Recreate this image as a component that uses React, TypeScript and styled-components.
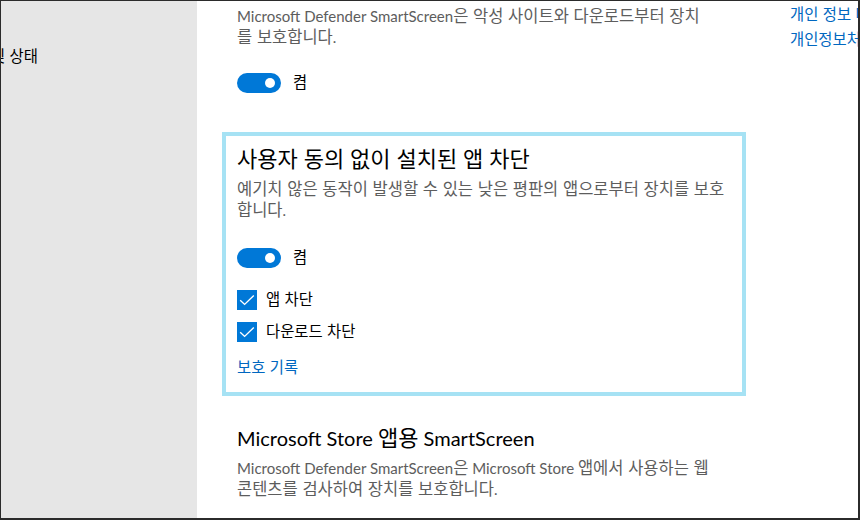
import React from "react";
import styled, { createGlobalStyle } from "styled-components";

const Global = createGlobalStyle`
  html, body { margin: 0; padding: 0; background: #ffffff; }
  body { font-family: "Lato", "Noto Sans CJK KR", sans-serif; }
  * { box-sizing: border-box; }
`;

const Frame = styled.div`
  width: 860px;
  height: 520px;
  display: flex;
  overflow: hidden;
  border-style: solid;
  border-color: #2b2b2b;
  border-width: 1px 2px 2px 1px;
  background: #ffffff;
`;

const Sidebar = styled.nav`
  width: 196px;
  flex: none;
  background: #e6e6e6;
  overflow: hidden;
  padding-top: 45px;
`;

const NavItem = styled.div`
  margin-left: -10px;
  font-size: 14px;
  line-height: 22px;
  color: #000000;
  white-space: nowrap;
`;

const Main = styled.main`
  flex: 1;
  display: flex;
  min-width: 0;
`;

const Column = styled.div`
  width: 565px;
  flex: none;
  padding-left: 25px;
`;

const Section = styled.section<{ $focused?: boolean; $top?: number; $bottom?: number }>`
  width: 524px;
  border: 4px solid ${(p) => (p.$focused ? "#a6e2f4" : "transparent")};
  padding: ${(p) => p.$top ?? 0}px 11px ${(p) => p.$bottom ?? 0}px;
`;

const Heading = styled.h2`
  margin: 0;
  font-weight: 400;
  font-size: 20px;
  line-height: 28px;
  color: #000000;
  white-space: nowrap;
`;

const Desc = styled.p<{ $gap?: number }>`
  margin: ${(p) => p.$gap ?? 0}px 0 0;
  font-size: 15px;
  line-height: 21px;
  color: #5d5d5d;
  white-space: nowrap;
`;

const Hangul = styled.span`
  display: inline-block;
  font-family: "Noto Sans CJK KR", sans-serif;
  font-size: 1.1em;
  line-height: 1.1;
  word-spacing: 1px;
  vertical-align: baseline;
`;

const ToggleRow = styled.div<{ $gap: number }>`
  display: flex;
  align-items: center;
  gap: 12px;
  margin-top: ${(p) => p.$gap}px;
  height: 20px;
`;

const Switch = styled.span`
  position: relative;
  width: 44px;
  height: 20px;
  border-radius: 10px;
  background: #0078d7;
  flex: none;
  &::after {
    content: "";
    position: absolute;
    top: 5px;
    right: 6px;
    width: 10px;
    height: 10px;
    border-radius: 50%;
    background: #ffffff;
  }
`;

const SmallLabel = styled.span`
  font-size: 14px;
  line-height: 20px;
  color: #000000;
`;

const CheckRow = styled.label<{ $gap: number }>`
  display: flex;
  align-items: center;
  gap: 9px;
  margin-top: ${(p) => p.$gap}px;
  height: 20px;
`;

const Box = styled.span`
  width: 20px;
  height: 20px;
  background: #0078d7;
  display: flex;
  align-items: center;
  justify-content: center;
  flex: none;
`;

const Link = styled.a<{ $gap?: number }>`
  display: block;
  margin-top: ${(p) => p.$gap ?? 0}px;
  font-size: 14px;
  line-height: 20px;
  color: #0067c0;
  text-decoration: none;
  white-space: nowrap;
`;

const Aside = styled.aside`
  padding-left: 28px;
  padding-top: 4px;
  display: flex;
  flex-direction: column;
  gap: 5px;
  overflow: hidden;
  min-width: 0;
`;

const HANGUL_RUN = /([\uAC00-\uD7A3\u3131-\u318E]+(?:\s+[\uAC00-\uD7A3\u3131-\u318E]+)*)/;

const T = ({ children }: { children: string }) => (
  <>
    {children.split(HANGUL_RUN).map((part, i) =>
      i % 2 === 1 ? <Hangul key={i}>{part}</Hangul> : <React.Fragment key={i}>{part}</React.Fragment>
    )}
  </>
);

const Check = () => (
  <svg width="16" height="12" viewBox="0 0 16 12">
    <path d="M1.2 6.2 L5.6 10.4 L14.8 1.4" fill="none" stroke="#ffffff" strokeWidth="1.4" />
  </svg>
);

export default function App() {
  return (
    <>
      <Global />
      <Frame>
        <Sidebar>
          <NavItem>
            <T>및 상태</T>
          </NavItem>
        </Sidebar>
        <Main>
          <Column>
            <Section $top={1} $bottom={35}>
              <Desc>
                <T>Microsoft Defender SmartScreen은 악성 사이트와 다운로드부터 장치</T>
                <br />
                <T>를 보호합니다.</T>
              </Desc>
              <ToggleRow $gap={25}>
                <Switch />
                <SmallLabel>
                  <T>켬</T>
                </SmallLabel>
              </ToggleRow>
            </Section>
            <Section $focused $top={9} $bottom={14}>
              <Heading>
                <T>사용자 동의 없이 설치된 앱 차단</T>
              </Heading>
              <Desc $gap={6}>
                <T>예기치 않은 동작이 발생할 수 있는 낮은 평판의 앱으로부터 장치를 보호</T>
                <br />
                <T>합니다.</T>
              </Desc>
              <ToggleRow $gap={27}>
                <Switch />
                <SmallLabel>
                  <T>켬</T>
                </SmallLabel>
              </ToggleRow>
              <CheckRow $gap={22}>
                <Box>
                  <Check />
                </Box>
                <SmallLabel>
                  <T>앱 차단</T>
                </SmallLabel>
              </CheckRow>
              <CheckRow $gap={12}>
                <Box>
                  <Check />
                </Box>
                <SmallLabel>
                  <T>다운로드 차단</T>
                </SmallLabel>
              </CheckRow>
              <Link $gap={16} href="#">
                <T>보호 기록</T>
              </Link>
            </Section>
            <Section $top={24} $bottom={0}>
              <Heading>
                <T>Microsoft Store 앱용 SmartScreen</T>
              </Heading>
              <Desc $gap={6}>
                <T>Microsoft Defender SmartScreen은 Microsoft Store 앱에서 사용하는 웹</T>
                <br />
                <T>콘텐츠를 검사하여 장치를 보호합니다.</T>
              </Desc>
            </Section>
          </Column>
          <Aside>
            <Link href="#">
              <T>개인 정보 대시보드</T>
            </Link>
            <Link href="#">
              <T>개인정보처리방침</T>
            </Link>
          </Aside>
        </Main>
      </Frame>
    </>
  );
}
